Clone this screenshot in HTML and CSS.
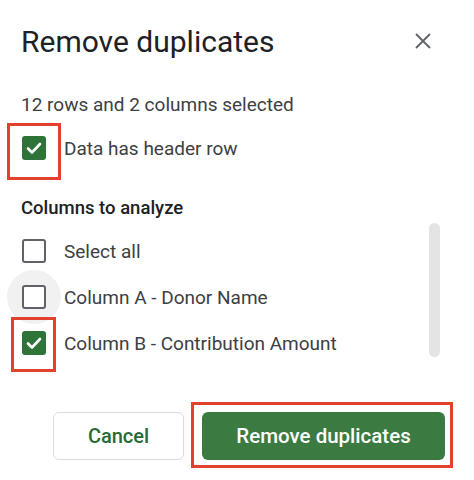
FILE: index.html
```html
<!DOCTYPE html>
<html>
<head>
<meta charset="utf-8">
<link rel="stylesheet" href="styles.css">
</head>
<body>
<div class="dialog">
  <div class="header">
    <h1 class="title">Remove duplicates</h1>
    <button class="close" aria-label="Close">
      <svg width="16" height="16" viewBox="0 0 16 16"><path d="M1 1 L15 15 M15 1 L1 15" stroke="#5f6368" stroke-width="1.8" fill="none"/></svg>
    </button>
  </div>
  <p class="summary">12 rows and 2 columns selected</p>
  <div class="row header-row">
    <span class="cb-wrap">
      <span class="cb checked"><svg viewBox="0 0 24 24" width="24" height="24"><path d="M6 12.5 L10 16.5 L18 8" stroke="#fff" stroke-width="2.6" fill="none" stroke-linecap="round" stroke-linejoin="round"/></svg></span>
      <span class="mark mark-a"></span>
    </span>
    <span class="label">Data has header row</span>
  </div>
  <h2 class="section">Columns to analyze</h2>
  <div class="list-area">
    <div class="list">
      <div class="row">
        <span class="cb-wrap"><span class="cb"></span></span>
        <span class="label">Select all</span>
      </div>
      <div class="row">
        <span class="cb-wrap"><span class="ripple"></span><span class="cb"></span></span>
        <span class="label">Column A - Donor Name</span>
      </div>
      <div class="row">
        <span class="cb-wrap">
          <span class="cb checked"><svg viewBox="0 0 24 24" width="24" height="24"><path d="M6 12.5 L10 16.5 L18 8" stroke="#fff" stroke-width="2.6" fill="none" stroke-linecap="round" stroke-linejoin="round"/></svg></span>
          <span class="mark mark-b"></span>
        </span>
        <span class="label">Column B - Contribution Amount</span>
      </div>
    </div>
    <div class="scrollbar"></div>
  </div>
  <div class="actions">
    <button class="btn cancel">Cancel</button>
    <span class="primary-wrap">
      <button class="btn primary">Remove duplicates</button>
      <span class="mark mark-btn"></span>
    </span>
  </div>
</div>
</body>
</html>
```
FILE: styles.css
```css
* { box-sizing: border-box; }
html, body { margin: 0; padding: 0; background: #fff; }
body { font-family: Roboto, "Liberation Sans", Arial, sans-serif; color: #202124; }
.dialog { width: 474px; height: 480px; padding: 22px 0 0 21px; position: relative; }
.header { display: flex; align-items: center; justify-content: space-between; padding-right: 43px; height: 38px; }
.title { margin: 0; font-size: 30px; font-weight: 400; color: #202124; letter-spacing: 0; }
.close { border: 0; background: none; padding: 0; width: 16px; height: 16px; display: flex; }
.summary { margin: 34px 0 0; font-size: 19px; color: #3c4043; line-height: 22px; }
.row { display: flex; align-items: center; height: 46px; }
.header-row { margin-top: 9px; }
.cb-wrap { position: relative; width: 24px; height: 24px; margin-left: 1px; margin-right: 18px; flex: none; }
.cb { position: relative; display: block; width: 24px; height: 24px; border: 2.5px solid #5f6368; border-radius: 3px; background: #fff; z-index: 1; }
.cb.checked { border: 0; background: #2e7439; }
.cb.checked svg { display: block; }
.ripple { position: absolute; left: -15px; top: -15px; width: 54px; height: 54px; border-radius: 50%; background: #f1f1f2; }
.label { font-size: 19px; color: #3c4043; }
.mark { position: absolute; border: 3px solid #e2412d; z-index: 2; }
.mark-a { left: -15px; top: -13px; width: 54px; height: 57px; }
.mark-b { left: -11px; top: -14px; width: 45px; height: 55px; }
.section { margin: 26px 0 0; font-size: 18.5px; font-weight: 500; color: #202124; line-height: 22px; }
.list-area { display: flex; justify-content: space-between; padding-right: 34px; margin-top: 4px; }
.list { padding-top: 5px; }
.scrollbar { width: 11px; height: 134px; margin-top: 0; border-radius: 5.5px; background: #e4e4e6; }
.actions { display: flex; gap: 18px; margin-top: 46px; padding-left: 32px; }
.btn { font-family: Roboto, "Liberation Sans", Arial, sans-serif; font-size: 20.5px; font-weight: 500; height: 48px; border-radius: 6px; cursor: pointer; }
.cancel { width: 131px; background: #fff; border: 1px solid #dadce0; color: #276b34; font-size: 20px; }
.primary-wrap { position: relative; display: block; }
.primary { width: 243px; background: #3b7b41; border: 0; color: #fff; display: block; }
.mark-btn { left: -11px; top: -10px; width: 262px; height: 66px; }
```
